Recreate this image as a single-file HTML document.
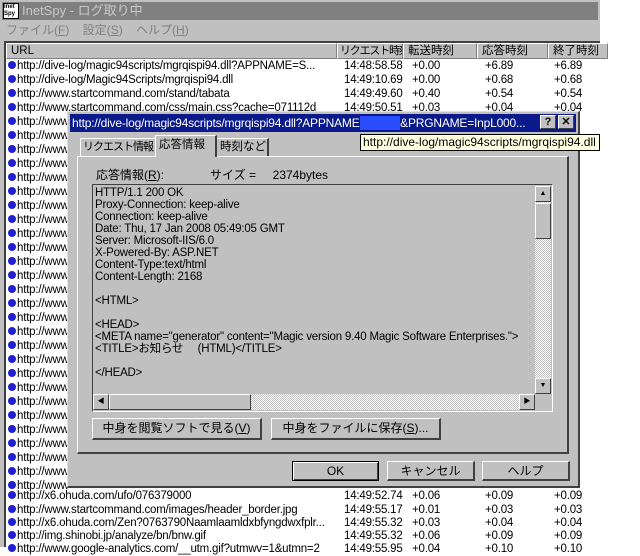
<!DOCTYPE html>
<html><head><meta charset="utf-8"><style>
*{margin:0;padding:0;box-sizing:border-box}
body{width:640px;height:547px;background:#fff;position:relative;overflow:hidden;font-family:"Liberation Sans","Noto Sans CJK JP",sans-serif;font-size:12px;color:#000}
.abs{position:absolute;white-space:nowrap}
.win{left:0;top:0;width:600px;height:547px;background:#c0c0c0}
.title{left:2px;top:2px;width:596px;height:18px;background:#808080;color:#c8c8c8;font-size:13px;line-height:18px;padding-left:20px}
.menu{left:6px;top:22px;color:#808080;font-size:12px;line-height:16px}
.list{left:4px;top:41px;width:596px;height:506px;background:#fff;border-left:2px solid #404040;border-top:2px solid #404040}
.hdr{top:0;height:16px;background:#c0c0c0;border-right:1px solid #808080;border-bottom:1px solid #808080;border-left:1px solid #fff;border-top:1px solid #fff;line-height:14px;padding-left:4px;white-space:nowrap;overflow:hidden;font-size:11.5px}
.row{left:2px;height:14px;line-height:14px;white-space:nowrap;font-size:11.5px;letter-spacing:-0.2px}
.row i{display:inline-block;width:8px;height:8px;border-radius:50%;background:#2020d0;margin-right:1px;vertical-align:0}
.c{position:absolute;top:0}
.dlg{left:67px;top:111px;width:513px;height:377px;background:#c0c0c0;border:1px solid #dfdfdf;border-right:2px solid #404040;border-bottom:2px solid #404040}
.dt{left:2px;top:2px;width:468px;height:18px;background:#0a1a8a;color:#fff;line-height:18px;padding-left:2px;font-size:12px;letter-spacing:-0.2px;white-space:nowrap;overflow:hidden}
.dtbg{left:2px;top:2px;width:506px;height:18px;background:#0a1a8a}
.tb{width:16px;height:14px;background:#c0c0c0;border:1px solid #fff;border-right-color:#404040;border-bottom-color:#404040;color:#000;font-weight:bold;font-size:11px;line-height:12px;text-align:center;top:3px}
.btn{background:#c0c0c0;border:1px solid #fff;border-right:2px solid #404040;border-bottom:2px solid #404040;text-align:center;line-height:18px;font-size:12px}
.ta{left:92px;top:184px;width:461px;height:228px;border:1px solid #404040;border-right-color:#fff;border-bottom-color:#fff;background:#c0c0c0}
.sb{background:repeating-conic-gradient(#c0c0c0 0 25%,#fff 0 50%) 0 0/2px 2px}
.ar{background:#c0c0c0;border:1px solid #fff;border-right-color:#404040;border-bottom-color:#404040;width:16px;height:16px;font-size:7px;line-height:14px;text-align:center}
</style></head><body>
<div class="abs win"></div>
<div class="abs title">InetSpy - ログ取り中</div>
<div class="abs" style="left:3px;top:3px;width:16px;height:16px;background:#fff;border:1px solid #000;font-size:6px;line-height:7px;font-weight:bold">Inet<br>Spy</div>
<div class="abs menu">ファイル(<u>F</u>)&nbsp;&nbsp;&nbsp; 設定(<u>S</u>)&nbsp;&nbsp;&nbsp; ヘルプ(<u>H</u>)</div>
<div class="abs list">
<div class="abs hdr" style="left:0;width:331px">URL</div>
<div class="abs hdr" style="left:331px;width:66px;letter-spacing:-1.2px;font-size:11px;padding-left:2px">リクエスト時刻</div>
<div class="abs hdr" style="left:397px;width:74px">転送時刻</div>
<div class="abs hdr" style="left:471px;width:71px">応答時刻</div>
<div class="abs hdr" style="left:542px;width:60px">終了時刻</div>
</div>
<div class="abs" style="left:6px;top:0">
<div class="abs row" style="top:59px"><i></i>http://dive-log/magic94scripts/mgrqispi94.dll?APPNAME=S...<span class="c" style="left:336px">14:48:58.58</span><span class="c" style="left:404px">+0.00</span><span class="c" style="left:477px">+6.89</span><span class="c" style="left:546px">+6.89</span></div>
<div class="abs row" style="top:73px"><i></i>http://dive-log/Magic94Scripts/mgrqispi94.dll<span class="c" style="left:336px">14:49:10.69</span><span class="c" style="left:404px">+0.00</span><span class="c" style="left:477px">+0.68</span><span class="c" style="left:546px">+0.68</span></div>
<div class="abs row" style="top:87px"><i></i>http://www.startcommand.com/stand/tabata<span class="c" style="left:336px">14:49:49.60</span><span class="c" style="left:404px">+0.40</span><span class="c" style="left:477px">+0.54</span><span class="c" style="left:546px">+0.54</span></div>
<div class="abs row" style="top:101px"><i></i>http://www.startcommand.com/css/main.css?cache=071112d<span class="c" style="left:336px">14:49:50.51</span><span class="c" style="left:404px">+0.03</span><span class="c" style="left:477px">+0.04</span><span class="c" style="left:546px">+0.04</span></div>
<div class="abs row" style="top:115px"><i></i>http://www</div><div class="abs row" style="top:129px"><i></i>http://www</div><div class="abs row" style="top:143px"><i></i>http://www</div><div class="abs row" style="top:157px"><i></i>http://www</div><div class="abs row" style="top:171px"><i></i>http://www</div><div class="abs row" style="top:185px"><i></i>http://www</div><div class="abs row" style="top:199px"><i></i>http://www</div><div class="abs row" style="top:213px"><i></i>http://www</div><div class="abs row" style="top:227px"><i></i>http://www</div><div class="abs row" style="top:241px"><i></i>http://www</div><div class="abs row" style="top:255px"><i></i>http://www</div><div class="abs row" style="top:269px"><i></i>http://www</div><div class="abs row" style="top:283px"><i></i>http://www</div><div class="abs row" style="top:297px"><i></i>http://www</div><div class="abs row" style="top:311px"><i></i>http://www</div><div class="abs row" style="top:325px"><i></i>http://www</div><div class="abs row" style="top:339px"><i></i>http://www</div><div class="abs row" style="top:353px"><i></i>http://www</div><div class="abs row" style="top:367px"><i></i>http://www</div><div class="abs row" style="top:381px"><i></i>http://www</div><div class="abs row" style="top:395px"><i></i>http://www</div><div class="abs row" style="top:409px"><i></i>http://www</div><div class="abs row" style="top:423px"><i></i>http://www</div><div class="abs row" style="top:437px"><i></i>http://www</div><div class="abs row" style="top:451px"><i></i>http://www</div><div class="abs row" style="top:465px"><i></i>http://www</div><div class="abs row" style="top:479px"><i></i>http://www</div>
<div class="abs row" style="top:489px"><i></i>http://x6.ohuda.com/ufo/076379000<span class="c" style="left:336px">14:49:52.74</span><span class="c" style="left:404px">+0.06</span><span class="c" style="left:477px">+0.09</span><span class="c" style="left:546px">+0.09</span></div>
<div class="abs row" style="top:503px"><i></i>http://www.startcommand.com/images/header_border.jpg<span class="c" style="left:336px">14:49:55.17</span><span class="c" style="left:404px">+0.01</span><span class="c" style="left:477px">+0.03</span><span class="c" style="left:546px">+0.03</span></div>
<div class="abs row" style="top:516px"><i></i><span style="display:inline-block;width:322px;overflow:hidden;vertical-align:top">http://x6.ohuda.com/Zen?0763790Naamlaamldxbfyngdwxfplr...</span><span class="c" style="left:336px">14:49:55.32</span><span class="c" style="left:404px">+0.03</span><span class="c" style="left:477px">+0.04</span><span class="c" style="left:546px">+0.04</span></div>
<div class="abs row" style="top:529px"><i></i>http://img.shinobi.jp/analyze/bn/bnw.gif<span class="c" style="left:336px">14:49:55.32</span><span class="c" style="left:404px">+0.06</span><span class="c" style="left:477px">+0.09</span><span class="c" style="left:546px">+0.09</span></div>
<div class="abs row" style="top:542px"><i></i><span style="display:inline-block;width:322px;overflow:hidden;vertical-align:top">http://www.google-analytics.com/__utm.gif?utmwv=1&amp;utmn=2</span><span class="c" style="left:336px">14:49:55.95</span><span class="c" style="left:404px">+0.04</span><span class="c" style="left:477px">+0.10</span><span class="c" style="left:546px">+0.10</span></div>
</div>

<div class="abs dlg">
<div class="abs dtbg"></div>
<div class="abs dt">http://dive-log/magic94scripts/mgrqispi94.dll?APPNAME<span style="background:#2a4cff;color:#2a4cff">xxxxxxx</span>&amp;PRGNAME=InpL000...</div>
<div class="abs tb" style="left:472px">?</div>
<div class="abs tb" style="left:490px">✕</div>
</div>
<div class="abs" style="left:80px;top:138px;width:76px;height:18px;border:1px solid #fff;border-bottom:none;border-right:1px solid #404040;line-height:16px;padding-left:2px;font-size:11px;letter-spacing:-1px;overflow:hidden">リクエスト情報</div>
<div class="abs" style="left:155px;top:135px;width:62px;height:22px;border:1px solid #fff;border-bottom:none;border-right:2px solid #404040;background:#c0c0c0;line-height:18px;padding-left:3px;z-index:2;font-size:11.5px">応答情報</div>
<div class="abs" style="left:217px;top:138px;width:52px;height:18px;border-top:1px solid #fff;border-right:2px solid #404040;line-height:16px;padding-left:3px;font-size:11.5px">時刻など</div>
<div class="abs" style="left:77px;top:156px;width:492px;height:298px;border:1px solid #fff;border-right:2px solid #404040;border-bottom:2px solid #404040"></div>
<div class="abs" style="left:96px;top:166px">応答情報(<u>R</u>):</div>
<div class="abs" style="left:210px;top:166px">サイズ =&nbsp;&nbsp;&nbsp;&nbsp; 2374bytes</div>
<div class="abs ta"></div>
<div class="abs" style="left:95px;top:187px;width:440px;overflow:hidden;line-height:12px;font-size:11.5px;letter-spacing:-0.2px;white-space:pre">HTTP/1.1 200 OK
Proxy-Connection: keep-alive
Connection: keep-alive
Date: Thu, 17 Jan 2008 05:49:05 GMT
Server: Microsoft-IIS/6.0
X-Powered-By: ASP.NET
Content-Type:text/html
Content-Length: 2168

&lt;HTML&gt;

&lt;HEAD&gt;
&lt;META name="generator" content="Magic version 9.40 Magic Software Enterprises."&gt;
&lt;TITLE&gt;お知らせ　 (HTML)&lt;/TITLE&gt;

&lt;/HEAD&gt;</div>
<div class="abs sb" style="left:535px;top:186px;width:16px;height:208px"></div>
<div class="abs ar" style="left:535px;top:186px">▲</div>
<div class="abs ar" style="left:535px;top:203px;height:36px"></div>
<div class="abs ar" style="left:535px;top:378px">▼</div>
<div class="abs sb" style="left:93px;top:394px;width:442px;height:16px"></div>
<div class="abs ar" style="left:93px;top:394px">◀</div>
<div class="abs ar" style="left:109px;top:394px;width:142px"></div>
<div class="abs ar" style="left:519px;top:394px">▶</div>
<div class="abs btn" style="left:92px;top:418px;width:170px;height:22px;line-height:19px">中身を閲覧ソフトで見る(<u>V</u>)</div>
<div class="abs btn" style="left:271px;top:418px;width:170px;height:22px;line-height:19px">中身をファイルに保存(<u>S</u>)...</div>
<div class="abs btn" style="left:292px;top:461px;width:87px;height:20px;border:1px solid #000;box-shadow:inset 1px 1px #fff,inset -1px -1px #404040">OK</div>
<div class="abs btn" style="left:387px;top:461px;width:88px;height:20px">キャンセル</div>
<div class="abs btn" style="left:482px;top:461px;width:88px;height:20px">ヘルプ</div>
<div class="abs" style="left:360px;top:134px;width:240px;height:17px;background:#ffffe1;border:1px solid #000;line-height:15px;padding-left:2px;white-space:nowrap;overflow:hidden;font-size:12px">http://dive-log/magic94scripts/mgrqispi94.dll</div>
</body></html>
